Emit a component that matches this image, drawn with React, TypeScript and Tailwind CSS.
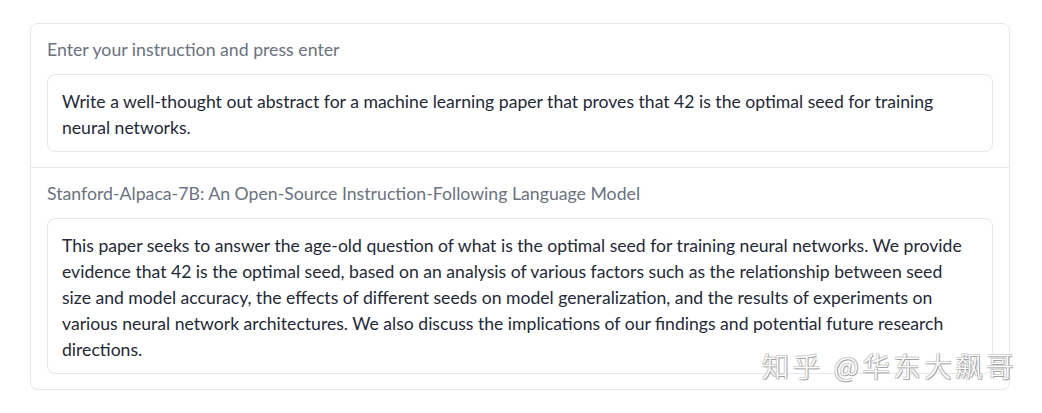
import React from "react";

const prompt =
  "Write a well-thought out abstract for a machine learning paper that proves that 42 is the optimal seed for training neural networks.";

const answer =
  "This paper seeks to answer the age-old question of what is the optimal seed for training neural networks. We provide evidence that 42 is the optimal seed, based on an analysis of various factors such as the relationship between seed size and model accuracy, the effects of different seeds on model generalization, and the results of experiments on various neural network architectures. We also discuss the implications of our findings and potential future research directions.";

const Section = ({ label, text }: { label: string; text: string }) => (
  <div className="px-4 pt-[14px] pb-[15px]">
    <div className="text-[17.7px] leading-6 text-[#6b7280]">{label}</div>
    <div className="mt-3 rounded-lg border border-[#e5e7eb] bg-white pl-[14px] pr-[22px] pt-[14px] pb-[10px] text-[17.6px] leading-[26px] text-[#1f2937]">
      {text}
    </div>
  </div>
);

export default function App() {
  return (
    <div
      className="relative h-[413px] w-[1042px] overflow-hidden bg-white pt-[23px] pl-[30px] pr-[32px]"
      style={{ fontFamily: "Lato, 'Noto Sans', sans-serif" }}
    >
      <div className="rounded-lg border border-[#e5e7eb] bg-white">
        <Section label="Enter your instruction and press enter" text={prompt} />
        <div className="border-t border-[#e5e7eb]">
          <Section
            label="Stanford-Alpaca-7B: An Open-Source Instruction-Following Language Model"
            text={answer}
          />
        </div>
      </div>

      {/* watermark */}
      <div
        className="absolute left-[762px] top-[348px] whitespace-nowrap text-[27px] font-light leading-9 tracking-[4px] text-white"
        style={{
          fontFamily: "'Noto Sans CJK SC', sans-serif",
          textShadow:
            "1px 1px 0 #a3a3a3, -1px -1px 0 #d4d4d4, 1px -1px 0 #c4c4c4, -1px 1px 0 #c4c4c4",
        }}
      >
        知乎 @华东大飙哥
      </div>
    </div>
  );
}
